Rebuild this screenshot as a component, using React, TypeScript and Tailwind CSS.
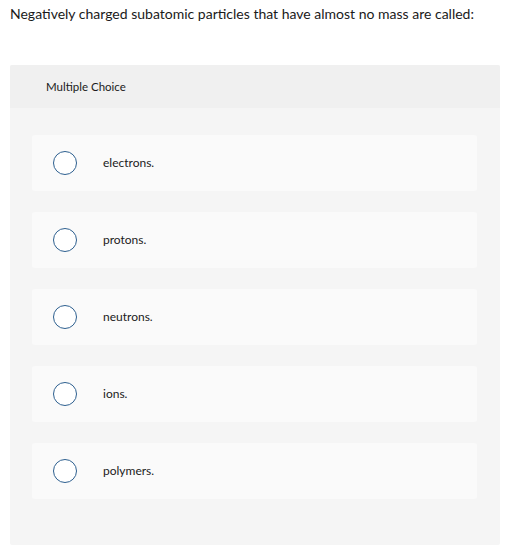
import React from "react";

const options = ["electrons.", "protons.", "neutrons.", "ions.", "polymers."];

export default function App() {
  return (
    <div className="w-[528px] h-[556px] bg-white text-[#222]" style={{ fontFamily: "Lato, 'Open Sans', sans-serif" }}>
      <div className="pt-[5px] pl-[10px] text-[14px] leading-[18px] text-[#1a1a1a]">
        Negatively charged subatomic particles that have almost no mass are called:
      </div>
      <div className="mt-[42px] ml-[10px] w-[490px] bg-[#f5f5f5] rounded-[2px] pb-[46px]">
        <div className="h-[43px] bg-[#f0f0f0] flex items-center pl-[36px] text-[11.5px] text-[#1a1a1a] rounded-t-[2px]">
          Multiple Choice
        </div>
        <div className="pt-[27px] pl-[22px] pr-[23px] flex flex-col gap-[21px]">
          {options.map((o) => (
            <div key={o} className="h-[56px] bg-[#fafafa] rounded-[3px] flex items-center">
              <div className="ml-[21px] w-[24px] h-[24px] rounded-full border border-[#2d5f8f] bg-white shrink-0" />
              <div className="ml-[26px] text-[12px] text-[#1a1a1a]">{o}</div>
            </div>
          ))}
        </div>
      </div>
    </div>
  );
}
